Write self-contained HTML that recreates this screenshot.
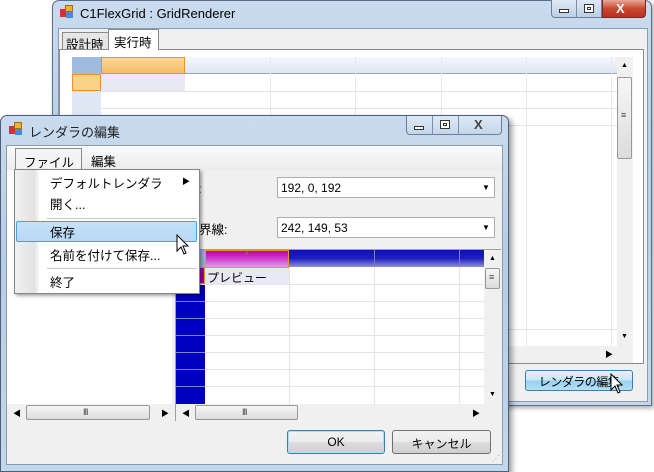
<!DOCTYPE html>
<html><head><meta charset="utf-8"><style>
*{box-sizing:border-box;margin:0;padding:0}
body{width:654px;height:472px;background:#fff;position:relative;overflow:hidden;font-family:"Liberation Sans","Noto Sans CJK JP",sans-serif;font-size:12px;color:#000}
.a{position:absolute}
.glass{background:linear-gradient(180deg,#c9dbee 0%,#b6cde6 40%,#c3d7ec 100%)}
.hs{background:#f0f0f0}
.thumb{position:absolute;border:1px solid #989898;border-radius:2px;background:linear-gradient(180deg,#f6f6f6,#dcdcdc)}
.grip{position:absolute;font-size:9px;color:#444;letter-spacing:-1px}
.btn{position:absolute;border:1px solid #707070;border-radius:3px;background:linear-gradient(180deg,#f2f2f2 0%,#ebebeb 50%,#dddddd 51%,#cfcfcf 100%);text-align:center;font-size:12px}
.vl{position:absolute;width:1px;background:#e4e4e4}
.hl{position:absolute;height:1px;background:#e4e4e4}
.m{position:absolute;left:50px;font-size:12.5px}
</style></head><body>

<!-- BACK WINDOW -->
<div class="a glass" style="left:52px;top:0;width:600px;height:406px;border:1px solid #5a6f8a;border-radius:7px 7px 0 0;box-shadow:2px 2px 5px rgba(0,0,0,.35)"></div>
<div class="a" style="left:60px;top:5px;width:13px;height:13px"><div class="a" style="left:0;top:4px;width:6px;height:8px;background:#c33"></div><div class="a" style="left:5px;top:0;width:8px;height:7px;background:#f0b030;border:1px solid #a07010"></div><div class="a" style="left:6px;top:7px;width:7px;height:6px;background:#4a8ad8"></div></div>
<div class="a" style="left:80px;top:6px;font-size:13px">C1FlexGrid : GridRenderer</div>
<div class="a" style="left:551px;top:0;width:51px;height:18px;border:1px solid #6a7f99;border-top:none;border-radius:0 0 0 4px;background:linear-gradient(180deg,#dfe9f5,#bccfe6)"></div>
<div class="a" style="left:576px;top:0;width:1px;height:18px;background:#7a8ea8"></div>
<div class="a" style="left:559px;top:9px;width:10px;height:4px;border:1px solid #333;background:#fff"></div>
<div class="a" style="left:584px;top:4px;width:10px;height:9px;border:1px solid #333;background:#fff"><div class="a" style="left:2px;top:2px;width:4px;height:3px;border:1px solid #333"></div></div>
<div class="a" style="left:602px;top:0;width:44px;height:18px;border:1px solid #7a2a20;border-top:none;border-radius:0 0 4px 0;background:linear-gradient(180deg,#e8a89a,#c84a30 50%,#b83020)"></div>
<div class="a" style="left:616px;top:1px;color:#fff;font-weight:bold;font-size:13px">X</div>
<div class="a" style="left:58px;top:28px;width:590px;height:374px;background:#f0f0f0;border:1px solid #8a9bb0"></div>
<div class="a" style="left:62px;top:32px;width:47px;height:18px;border:1px solid #8a8a8a;border-bottom:none;background:#e6e6e6;font-size:12.5px;padding:1px 0 0 3px">設計時</div>
<div class="a" style="left:59px;top:49px;width:585px;height:315px;border:1px solid #8a8a8a;background:#fff"></div>
<div class="a" style="left:108px;top:29px;width:51px;height:21px;border:1px solid #8a8a8a;border-bottom:none;background:#fff;font-size:12.5px;padding:2px 0 0 5px">実行時</div>
<div class="a" style="left:72px;top:57px;width:545px;height:17px;background:linear-gradient(180deg,#f5f8fc,#dde6f1);border-bottom:1px solid #90a8c8"></div>
<div class="a" style="left:72px;top:57px;width:29px;height:17px;background:#9fbbe0"></div>
<div class="a" style="left:101px;top:57px;width:84px;height:17px;background:linear-gradient(180deg,#f8d9a0,#f4bc60);border:1px solid #f0902a"></div>
<div class="a" style="left:72px;top:74px;width:29px;height:290px;background:#dfe8f4"></div>
<div class="a" style="left:72px;top:74px;width:29px;height:17px;background:#fcd28a;border:1px solid #f0902a"></div>
<div class="a" style="left:101px;top:74px;width:84px;height:17px;background:#e8e9f5"></div>
<div class="vl" style="left:270px;top:57px;height:290px;background:#e8e8e8"></div>
<div class="vl" style="left:355px;top:57px;height:290px;background:#e8e8e8"></div>
<div class="vl" style="left:441px;top:57px;height:290px;background:#e8e8e8"></div>
<div class="vl" style="left:526px;top:57px;height:290px;background:#e8e8e8"></div>
<div class="vl" style="left:611px;top:57px;height:290px;background:#e8e8e8"></div>
<div class="hl" style="left:72px;top:91px;width:545px"></div><div class="hl" style="left:72px;top:108px;width:545px"></div><div class="hl" style="left:72px;top:125px;width:545px"></div>
<div class="hl" style="left:72px;top:329px;width:545px"></div>
<div class="a hs" style="left:617px;top:57px;width:16px;height:290px"></div>
<div class="a" style="left:621px;top:62px;font-size:7px">▲</div>
<div class="thumb" style="left:617px;top:77px;width:15px;height:82px"></div>
<div class="grip" style="left:621px;top:110px">≡</div>
<div class="a" style="left:621px;top:333px;font-size:7px">▼</div>
<div class="a hs" style="left:72px;top:346px;width:561px;height:17px"></div>
<div class="a" style="left:605px;top:349px;font-size:8px">▶</div>
<div class="btn" style="left:525px;top:370px;width:108px;height:21px;border-color:#3c7fb1;padding-top:2px;letter-spacing:-0.5px;background:linear-gradient(180deg,#e5f4fc,#c4e5f6 50%,#98d1ef 51%,#b6dff4)">レンダラの編集</div>
<svg class="a" style="left:610px;top:373px" width="14" height="22" viewBox="0 0 14 22"><path d="M1 1 L1 17 L5 13 L8 20 L10 19 L7 12 L12 12 Z" fill="#fff" stroke="#000" stroke-width="1"/></svg>

<!-- FRONT WINDOW -->
<div class="a glass" style="left:0;top:115px;width:509px;height:357px;border:1px solid #4c5f78;border-radius:7px 7px 0 0;box-shadow:3px 3px 6px rgba(0,0,0,.4)"></div>
<div class="a" style="left:9px;top:122px;width:13px;height:13px"><div class="a" style="left:0;top:4px;width:6px;height:8px;background:#c33"></div><div class="a" style="left:5px;top:0;width:8px;height:7px;background:#f0b030;border:1px solid #a07010"></div><div class="a" style="left:6px;top:7px;width:7px;height:6px;background:#4a8ad8"></div></div>
<div class="a" style="left:29px;top:122px;font-size:13px;color:#222">レンダラの編集</div>
<div class="a" style="left:406px;top:116px;width:96px;height:19px;border:1px solid #6a7f99;border-top:none;border-radius:0 0 4px 4px;background:linear-gradient(180deg,#dfe9f5,#c4d6ea)"></div>
<div class="a" style="left:432px;top:116px;width:1px;height:19px;background:#7a8ea8"></div>
<div class="a" style="left:458px;top:116px;width:1px;height:19px;background:#7a8ea8"></div>
<div class="a" style="left:414px;top:126px;width:10px;height:4px;border:1px solid #333;background:#fff"></div>
<div class="a" style="left:440px;top:120px;width:10px;height:9px;border:1px solid #333;background:#fff"><div class="a" style="left:2px;top:2px;width:4px;height:3px;border:1px solid #333"></div></div>
<div class="a" style="left:474px;top:117px;color:#444;font-weight:bold;font-size:13px">X</div>
<div class="a" style="left:6px;top:145px;width:497px;height:320px;background:#f0f0f0;border:1px solid #8a9bb0"></div>
<div class="a" style="left:7px;top:146px;width:495px;height:24px;background:linear-gradient(180deg,#fafafa,#ececec)"></div>
<div class="a" style="left:15px;top:148px;width:67px;height:22px;border:1px solid #8a8a8a;border-bottom:none;background:#f4f4f4;font-size:12.5px;padding:3px 0 0 8px">ファイル</div>
<div class="a" style="left:91px;top:151px;font-size:12.5px">編集</div>
<div class="a" style="left:7px;top:170px;width:165px;height:235px;background:#fff"></div>
<div class="a hs" style="left:7px;top:404px;width:165px;height:17px"></div>
<div class="a" style="left:13px;top:408px;font-size:8px">◀</div>
<div class="thumb" style="left:26px;top:405px;width:124px;height:15px"></div>
<div class="grip" style="left:83px;top:407px">III</div>
<div class="a" style="left:161px;top:408px;font-size:8px">▶</div>
<div class="a" style="left:198px;top:181px;font-size:13px">:</div>
<div class="a" style="left:199px;top:219px;font-size:12.5px">界線:</div>
<div class="a" style="left:277px;top:177px;width:218px;height:21px;background:#fff;border:1px solid #abadb3;padding:3px 0 0 3px">192, 0, 192</div>
<div class="a" style="left:482px;top:183px;font-size:8px">▼</div>
<div class="a" style="left:277px;top:217px;width:218px;height:21px;background:#fff;border:1px solid #abadb3;padding:3px 0 0 3px">242, 149, 53</div>
<div class="a" style="left:482px;top:223px;font-size:8px">▼</div>
<div class="a" style="left:175px;top:249px;width:326px;height:172px;background:#fff;border-top:1px solid #a0a0a0;border-left:1px solid #a0a0a0"></div>
<div class="a" style="left:176px;top:250px;width:308px;height:17px;background:linear-gradient(180deg,#1010b0 0%,#2020c0 50%,#9090d8 100%)"></div>
<div class="a" style="left:176px;top:250px;width:29px;height:17px;background:#9aaed0"></div>
<div class="a" style="left:205px;top:250px;width:84px;height:18px;background:linear-gradient(180deg,#b800b8,#d040d0 50%,#e0a0e8);border:1px solid #f0902a"></div>
<div class="a" style="left:244px;top:251px;font-size:6px;color:#707070">▼</div>
<div class="vl" style="left:374px;top:250px;height:155px"></div><div class="vl" style="left:459px;top:250px;height:155px"></div><div class="vl" style="left:289px;top:267px;height:138px"></div>
<div class="vl" style="left:374px;top:250px;height:17px;background:#8080c0"></div><div class="vl" style="left:459px;top:250px;height:17px;background:#8080c0"></div>
<div class="a" style="left:176px;top:267px;width:29px;height:138px;background:#0000c0"></div>
<div class="a" style="left:176px;top:267px;width:29px;height:17px;background:#a000a0;border:1px solid #f0902a"></div>
<div class="a" style="left:205px;top:268px;width:84px;height:17px;background:#e8e9f5;padding:1px 0 0 2px">プレビュー</div>
<div class="hl" style="left:176px;top:284px;width:308px"></div><div class="hl" style="left:176px;top:301px;width:308px"></div><div class="hl" style="left:176px;top:318px;width:308px"></div><div class="hl" style="left:176px;top:335px;width:308px"></div><div class="hl" style="left:176px;top:352px;width:308px"></div><div class="hl" style="left:176px;top:369px;width:308px"></div><div class="hl" style="left:176px;top:386px;width:308px"></div>
<div class="hl" style="left:176px;top:301px;width:29px;background:#8080d0"></div><div class="hl" style="left:176px;top:318px;width:29px;background:#8080d0"></div><div class="hl" style="left:176px;top:335px;width:29px;background:#8080d0"></div><div class="hl" style="left:176px;top:352px;width:29px;background:#8080d0"></div><div class="hl" style="left:176px;top:369px;width:29px;background:#8080d0"></div><div class="hl" style="left:176px;top:386px;width:29px;background:#8080d0"></div>
<div class="a hs" style="left:484px;top:250px;width:17px;height:171px"></div>
<div class="a" style="left:489px;top:255px;font-size:7px">▲</div>
<div class="thumb" style="left:485px;top:268px;width:15px;height:21px"></div>
<div class="grip" style="left:489px;top:272px">≡</div>
<div class="a" style="left:489px;top:391px;font-size:7px">▼</div>
<div class="a hs" style="left:176px;top:404px;width:308px;height:17px"></div>
<div class="a" style="left:182px;top:408px;font-size:8px">◀</div>
<div class="thumb" style="left:195px;top:405px;width:103px;height:15px"></div>
<div class="grip" style="left:242px;top:407px">III</div>
<div class="a" style="left:472px;top:408px;font-size:8px">▶</div>
<div class="btn" style="left:287px;top:430px;width:98px;height:24px;border-color:#3c7fb1;padding-top:4px;box-shadow:inset 0 0 0 1px #a8e0f8">OK</div>
<div class="btn" style="left:392px;top:430px;width:99px;height:24px;padding-top:4px">キャンセル</div>
<div class="a" style="left:492px;top:454px;font-size:8px;color:#aaa">⋰</div>

<!-- DROPDOWN MENU -->
<div class="a" style="left:14px;top:169px;width:186px;height:125px;background:#f0f0f0;border:1px solid #868686;box-shadow:2px 2px 3px rgba(0,0,0,.35)"></div>
<div class="a" style="left:15px;top:170px;width:24px;height:123px;background:linear-gradient(90deg,#f0f0f0,#e2e2e2 80%,#f8f8f8)"></div>
<div class="a" style="left:39px;top:170px;width:160px;height:123px;background:#fff"></div>
<div class="m" style="top:173px">デフォルトレンダラ</div>
<div class="a" style="left:182px;top:176px;font-size:8px">▶</div>
<div class="m" style="top:194px">開く...</div>
<div class="hl" style="left:47px;top:218px;width:150px;background:#c8c8c8"></div>
<div class="a" style="left:16px;top:221px;width:181px;height:21px;background:linear-gradient(180deg,#c5e1fa,#b8d8f6);border:1px solid #4f9ee0;border-radius:2px"></div>
<div class="m" style="top:222px">保存</div>
<div class="m" style="top:245px">名前を付けて保存...</div>
<div class="hl" style="left:47px;top:268px;width:150px;background:#c8c8c8"></div>
<div class="m" style="top:272px">終了</div>
<svg class="a" style="left:176px;top:234px" width="14" height="22" viewBox="0 0 14 22"><path d="M1 1 L1 17 L5 13 L8 20 L10 19 L7 12 L12 12 Z" fill="#fff" stroke="#000" stroke-width="1"/></svg>
</body></html>
